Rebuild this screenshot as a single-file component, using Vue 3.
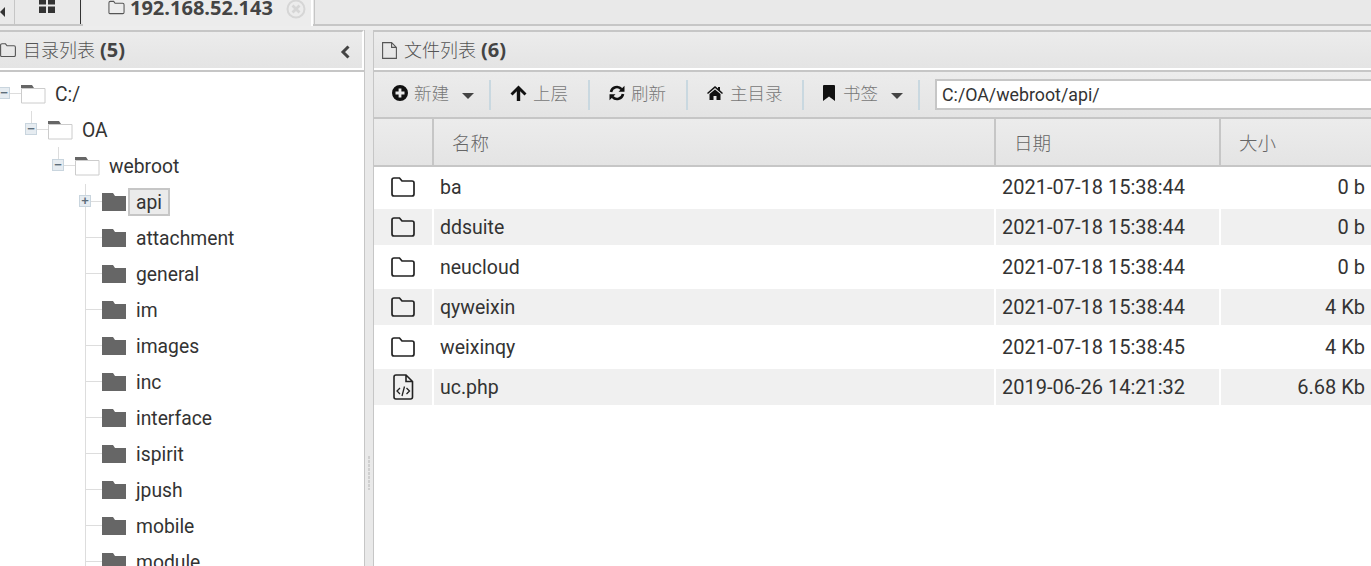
<script setup>
const tree = [
  { name: 'C:/', level: 0, state: 'minus', open: true },
  { name: 'OA', level: 1, state: 'minus', open: true, up: true },
  { name: 'webroot', level: 2, state: 'minus', open: true, up: true },
  { name: 'api', level: 3, state: 'plus', selected: true, trunk: true },
  { name: 'attachment', level: 3, trunk: true },
  { name: 'general', level: 3, trunk: true },
  { name: 'im', level: 3, trunk: true },
  { name: 'images', level: 3, trunk: true },
  { name: 'inc', level: 3, trunk: true },
  { name: 'interface', level: 3, trunk: true },
  { name: 'ispirit', level: 3, trunk: true },
  { name: 'jpush', level: 3, trunk: true },
  { name: 'mobile', level: 3, trunk: true },
  { name: 'module', level: 3, trunk: true }
]
const files = [
  { name: 'ba', date: '2021-07-18 15:38:44', size: '0 b', type: 'dir' },
  { name: 'ddsuite', date: '2021-07-18 15:38:44', size: '0 b', type: 'dir' },
  { name: 'neucloud', date: '2021-07-18 15:38:44', size: '0 b', type: 'dir' },
  { name: 'qyweixin', date: '2021-07-18 15:38:44', size: '4 Kb', type: 'dir' },
  { name: 'weixinqy', date: '2021-07-18 15:38:45', size: '4 Kb', type: 'dir' },
  { name: 'uc.php', date: '2019-06-26 14:21:32', size: '6.68 Kb', type: 'code' }
]
</script>

<template>
  <div class="page">
    <header class="topbar">
      <span class="back"></span>
      <button class="grid-btn">
        <svg width="18" height="16" viewBox="0 0 18 16"><path fill="#333" d="M1 0h7v6.500H1zM10 0h7v6.500h-7zM1 8.500h7V15H1zM10 8.500h7V15h-7z" /></svg>
      </button>
      <div class="tab">
        <svg width="17" height="15" viewBox="0 0 18 15" fill="none" stroke="#555" stroke-width="1.100"><path d="M1 13V2.500Q1 1 2.500 1H6l1.500 2H15.500Q17 3 17 4.500V12.500Q17 14 15.500 14H2Q1 14 1 13z" /></svg>
        <b>192.168.52.143</b>
        <svg class="close" width="20" height="20" viewBox="0 0 20 20" fill="none" stroke="#d6d6d6"><circle cx="10" cy="10" r="8.500" stroke-width="2" /><path d="M6.500 6.500l7 7M13.500 6.500l-7 7" stroke-width="2.800" /></svg>
      </div>
      <div class="tab-rest"></div>
    </header>

    <main class="body">
      <section class="left">
        <div class="head left-head">
          <svg class="head-icon" width="16" height="14" viewBox="0 0 16 14" fill="none" stroke="#555" stroke-width="1.100"><path d="M.6 12.500V2Q.6.8 2 .8h3.500l1.500 2h7q1.400 0 1.400 1.400v8q0 1.300-1.400 1.300H1.600Q.6 13.500.6 12.500z" /></svg>
          <span class="cjk">目录列表</span> <b>(5)</b>
          <svg class="chev" width="10" height="14" viewBox="0 0 10 14"><path fill="none" stroke="#444" stroke-width="3" d="M8.500 1.500L3 7l5.500 5.500" /></svg>
        </div>
        <ul class="tree">
          <li v-for="n in tree" :key="n.name" class="node" :class="{ up: n.up, trunk: n.trunk }" :style="{ '--lv': n.level }">
            <span class="exp-slot">
              <span v-if="n.state" class="exp">{{ n.state === 'plus' ? '+' : '−' }}</span>
            </span>
            <svg class="tfolder" width="25" height="20" viewBox="0 0 25 20">
              <template v-if="n.open">
                <path fill="#666" d="M0 1h11l2 3H0z" />
                <path fill="#fff" stroke="#ccc" stroke-width="1" d="M.5 4.500h23.500v14.500H.5z" />
              </template>
              <template v-else>
                <path fill="#666" d="M0 1h11l2 3h11v15H0z" />
              </template>
            </svg>
            <span class="label" :class="{ sel: n.selected }">{{ n.name }}</span>
          </li>
        </ul>
      </section>

      <div class="split"><span class="grip"></span></div>

      <section class="right">
        <div class="head right-head">
          <svg class="head-icon" width="15" height="17" viewBox="0 0 15 17" fill="none" stroke="#555" stroke-width="1.100"><path d="M.6.6h9l4.800 4.800v11H.6zM9.600.6v4.800h4.800" /></svg>
          <span class="cjk">文件列表</span> <b>(6)</b>
        </div>

        <div class="toolbar">
          <div class="group g1">
            <svg width="16" height="16" viewBox="0 0 16 16"><path fill="#111" fill-rule="evenodd" d="M8 0a8 8 0 1 1 0 16A8 8 0 0 1 8 0zM6.600 3.500v3.100H3.500v2.800h3.100v3.100h2.800V9.400h3.100V6.600H9.400V3.500z" /></svg>
            <span class="cjk tool">新建</span>
            <span class="caret"></span>
          </div>
          <div class="group g2">
            <svg width="17" height="16" viewBox="0 0 17 16"><path fill="#111" d="M8.500.5l8 8-2 2-4.300-4.300V16H6.800V6.200L2.500 10.500l-2-2z" /></svg>
            <span class="cjk tool">上层</span>
          </div>
          <div class="group g3">
            <svg width="16" height="16" viewBox="0 0 16 16" fill="none" stroke="#111" stroke-width="2.600"><path d="M2 7a6 6 0 0 1 10.500-2.800M14 9a6 6 0 0 1-10.500 2.800" /><path fill="#111" stroke="none" d="M15.500.8v6h-6zM.5 15.200v-6h6z" /></svg>
            <span class="cjk tool">刷新</span>
          </div>
          <div class="group g4">
            <svg width="16" height="14" viewBox="0 0 16 14"><path fill="#111" d="M8 0l3 2.600V1h2v3.300L16 7l-1 1.100-7-6-7 6L0 7zM8 3.400l5.500 4.700V14H9.500v-4h-3v4h-4V8.100z" /></svg>
            <span class="cjk tool">主目录</span>
          </div>
          <div class="group g5">
            <svg width="12" height="16" viewBox="0 0 12 16"><path fill="#111" d="M1 0h10q1 0 1 1v15l-6-4.600L0 16V1q0-1 1-1z" /></svg>
            <span class="cjk tool">书签</span>
            <span class="caret"></span>
          </div>
          <input class="path" value="C:/OA/webroot/api/" readonly />
        </div>

        <div class="table">
          <div class="th th-icon"></div>
          <div class="th cjk">名称</div>
          <div class="th cjk">日期</div>
          <div class="th cjk">大小</div>
          <template v-for="(f, i) in files" :key="f.name">
            <div class="td icon-cell" :class="{ odd: i % 2 }">
              <svg v-if="f.type === 'dir'" width="24" height="20" viewBox="0 0 24 20" fill="none" stroke="#222" stroke-width="1.700"><path d="M1 17V3q0-2 2-2h5.500l2.500 3h10q2 0 2 2v11q0 2-2 2H3q-2 0-2-2z" /></svg>
              <svg v-else width="22" height="26" viewBox="0 0 22 26" fill="none" stroke="#222" stroke-width="1.600"><path d="M2 3q0-2 2-2h10l6.500 6.500V23q0 2-2 2H4q-2 0-2-2zM14 1v6.500h6.500" /><path stroke-width="1.300" d="M8 14l-3 3 3 3M14.500 14l3 3-3 3M12.500 12.500l-2.500 9.500" /></svg>
            </div>
            <div class="td name" :class="{ odd: i % 2 }">{{ f.name }}</div>
            <div class="td date" :class="{ odd: i % 2 }">{{ f.date }}</div>
            <div class="td size" :class="{ odd: i % 2 }">{{ f.size }}</div>
          </template>
        </div>
      </section>
    </main>
  </div>
</template>

<style>
html, body { margin: 0; background: #fff; overflow: hidden; }
</style>

<style scoped>
.page {
  width: 1371px;
  height: 566px;
  overflow: hidden;
  display: flex;
  flex-direction: column;
  font-family: Roboto, "Noto Sans CJK SC", sans-serif;
  font-size: 19px;
  color: #333;
}
.cjk { font-family: "Noto Sans CJK SC", sans-serif; font-weight: 300; }

.topbar {
  height: 30px;
  flex: none;
  display: flex;
  background: linear-gradient(#e9e9e9 0 24px, #c6c6c6 24px 26px, #ededed 26px);
  box-sizing: border-box;
}
.back {
  width: 0;
  height: 0;
  margin: 7px 8px 0 0;
  border: 5px solid transparent;
  border-left-width: 0;
  border-right: 5px solid #333;
  flex: none;
}
.grid-btn {
  width: 67px;
  height: 24px;
  margin-left: 1px;
  padding: 0 2px 10px 0;
  box-sizing: border-box;
  background: #e9e9e9;
  border: 0;
  border-left: 1px solid #c6c6c6;
  border-right: 1px solid #333;
  display: flex;
  align-items: flex-end;
  justify-content: center;
  overflow: hidden;
  flex: none;
}
.tab {
  width: 230px;
  height: 26px;
  margin-left: 2px;
  padding-left: 25px;
  box-sizing: border-box;
  background: #ececec;
  border-right: 2px solid #fff;
  display: flex;
  align-items: flex-start;
  gap: 5px;
  flex: none;
  line-height: 16px;
}
.tab svg { flex: none; }
.tab b { font: 700 20px/16px "Open Sans", sans-serif; color: #444; }
.tab .close { margin: -1px 0 0 8px; }
.tab-rest {
  flex: 1;
  height: 24px;
  border-left: 1px solid #c6c6c6;
  margin-left: 1px;
}

.body { flex: 1; display: flex; min-height: 0; }
.left { width: 364px; flex: none; display: flex; flex-direction: column; min-height: 0; }
.right { flex: 1; display: flex; flex-direction: column; min-width: 0; }
.split {
  width: 8px;
  flex: none;
  border: solid #c6c6c6;
  border-width: 0 1px;
  background: #e9e9e9;
  position: relative;
}
.grip {
  position: absolute;
  left: 3px;
  top: 426px;
  width: 2px;
  height: 34px;
  background: repeating-linear-gradient(#cfcfcf 0 3px, transparent 3px 4px);
}

.head {
  height: 38px;
  flex: none;
  box-sizing: border-box;
  border-top: 2px solid #c6c6c6;
  background: linear-gradient(#ececec, #e4e4e4);
  display: flex;
  align-items: center;
  color: #555;
  font-size: 18px;
  white-space: pre;
  position: relative;
}
.head > span, .head > b { position: relative; top: -1px; }
.head b { color: #444; font-family: "Open Sans", sans-serif; font-size: 20px; margin-left: 5px; }
.head-icon { flex: none; margin-right: 7px; }
.left-head { border-right: 2px solid #fff; margin-bottom: 2px; }
.left-head::after {
  content: "";
  position: absolute;
  left: 0;
  right: -2px;
  bottom: -4px;
  height: 2px;
  background: #c6c6c6;
}
.right-head { padding-left: 8px; margin-bottom: 2px; }
.chev { position: absolute; right: 12px; top: 13px; }

.tree { list-style: none; margin: 2px 0 0; padding: 4px 0 0; flex: 1; overflow: hidden; }
.node {
  height: 36px;
  display: flex;
  align-items: center;
  position: relative;
  padding-left: calc(var(--lv) * 27px);
  font-size: 19.300px;
  color: #333;
}
.exp-slot { width: 21px; flex: none; position: relative; height: 100%; }
.exp {
  position: absolute;
  left: -2px;
  top: 11px;
  width: 12px;
  height: 12px;
  box-sizing: border-box;
  border: 1px solid #c9d5de;
  background: #e6ecf1;
  color: #5d6d7a;
  font: 700 13px/10px "Liberation Sans", sans-serif;
  text-align: center;
  z-index: 1;
}
.exp-slot::after {
  content: "";
  position: absolute;
  left: 10px;
  right: 0;
  top: 17px;
  height: 1px;
  background: #ddd;
}
.node.up::before {
  content: "";
  position: absolute;
  left: calc(var(--lv) * 27px + 4px);
  top: -1px;
  width: 1px;
  height: 13px;
  background: #ddd;
}
.node.trunk::before {
  content: "";
  position: absolute;
  left: 85px;
  top: 0;
  bottom: 0;
  width: 1px;
  background: #ddd;
}
.node.trunk .exp-slot::after { left: 4px; }
.tfolder { flex: none; }
.label { margin-left: 1px; padding: 2px 7px 0; line-height: 24px; border: 1px solid transparent; white-space: nowrap; }
.label.sel { background: #ebebeb; border: 2px solid #c6c6c6; padding: 2px 6px 0; line-height: 22px; }

.toolbar {
  height: 49px;
  flex: none;
  box-sizing: border-box;
  border-top: 2px solid #c6c6c6;
  border-bottom: 2px solid #c6c6c6;
  background: linear-gradient(#ececec, #e4e4e4);
  display: flex;
  align-items: center;
}
.group {
  height: 30px;
  box-sizing: border-box;
  border-right: 2px solid #c9d8e0;
  display: flex;
  align-items: center;
  flex: none;
}
.group svg { position: relative; top: -1.500px; }
.g1 { width: 117px; padding-left: 18px; }
.g2 { width: 99px; padding-left: 19px; }
.g3 { width: 98px; padding-left: 19px; }
.g4 { width: 116px; padding-left: 19px; }
.g5 { width: 116px; padding-left: 19px; }
.tool { margin-left: 6px; color: #777; font-size: 17.500px; position: relative; top: -2px; }
.g4 .tool { margin-left: 7px; }
.g5 .tool { margin-left: 8px; }
.caret {
  margin-left: 13px;
  margin-top: 2px;
  border: 6.500px solid transparent;
  border-top: 6.500px solid #444;
  border-bottom-width: 0;
}
.path {
  margin-left: 15px;
  flex: 1;
  min-width: 0;
  height: 31px;
  box-sizing: border-box;
  border: 2px solid #c6c6c6;
  border-right: 0;
  padding: 0 0 0 5px;
  font: 17.800px Roboto, sans-serif;
  color: #333;
  background: #fff;
  outline: none;
}

.table {
  display: grid;
  grid-template-columns: 58px 560px 223px 150px;
  column-gap: 2px;
  row-gap: 4px;
  grid-auto-rows: 36px;
  grid-template-rows: 46px;
}
.th {
  box-sizing: border-box;
  height: 48px;
  border-bottom: 2px solid #c6c6c6;
  background: linear-gradient(#ececec, #e4e4e4);
  color: #666;
  font-size: 18.500px;
  display: flex;
  align-items: center;
  padding-left: 18px;
  box-shadow: 2px 0 0 #c6c6c6;
}
.td {
  display: flex;
  align-items: center;
  color: #333;
  font-size: 19.500px;
  padding: 0 6px;
  box-sizing: border-box;
  white-space: nowrap;
}
.td.date, .td.size { font-size: 20px; }
.td.odd { background: #f0f0f0; }
.icon-cell { justify-content: center; padding: 0; }
.size { justify-content: flex-end; }
</style>
